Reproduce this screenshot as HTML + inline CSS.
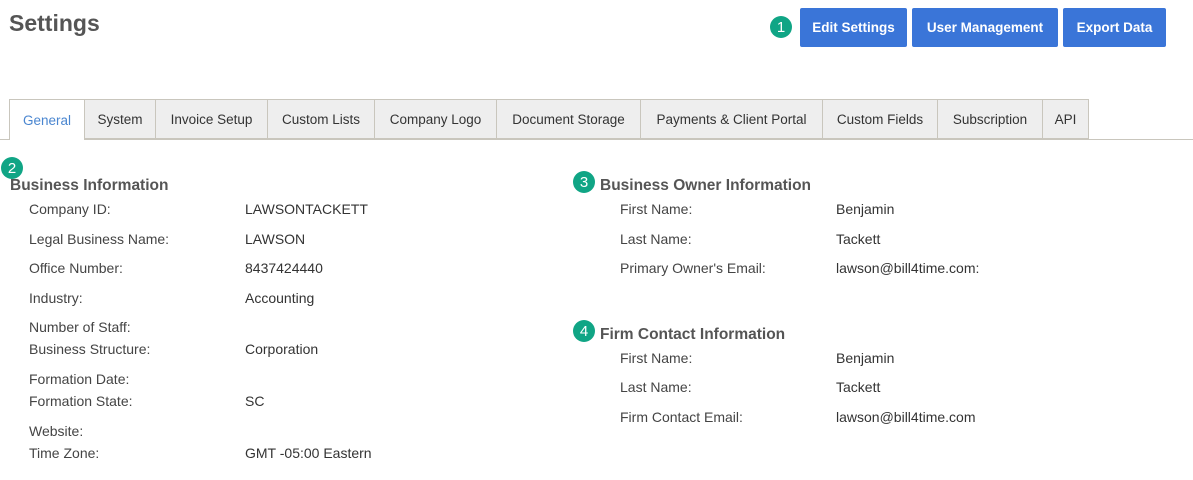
<!DOCTYPE html>
<html><head><style>
body{margin:0;width:1193px;height:480px;background:#fff;font-family:"Liberation Sans",sans-serif;position:relative;overflow:hidden;color:#444}
.a{position:absolute;white-space:nowrap}
.btn{position:absolute;top:8px;height:39px;background:#3a75d8;color:#fff;font-size:13.5px;font-weight:bold;border-radius:2px;display:flex;align-items:center;justify-content:center}
.badge{position:absolute;width:22px;height:22px;border-radius:50%;background:#10a585;color:#fff;font-size:15px;display:flex;align-items:center;justify-content:center}
.tab{position:absolute;top:99px;height:40px;background:#eeeeee;border:1px solid #c9c6bd;border-left:none;box-sizing:border-box;font-size:13.5px;color:#333;display:flex;align-items:center;justify-content:center;white-space:nowrap}
.h{position:absolute;font-size:15.5px;font-weight:bold;color:#555;white-space:nowrap}
.l,.v{position:absolute;font-size:14px;color:#444;white-space:nowrap}
.v{color:#333}
</style></head><body>
<div class="a" style="left:9px;top:10px;font-size:23px;font-weight:bold;color:#555">Settings</div>
<div class="badge" style="left:770px;top:16px">1</div>
<div class="btn" style="left:800px;width:107px">Edit Settings</div>
<div class="btn" style="left:912px;width:146px">User Management</div>
<div class="btn" style="left:1063px;width:103px">Export Data</div>
<div class="a" style="left:0;top:139px;width:1193px;height:1px;background:#c9c6bd"></div>
<div class="tab" style="left:9px;width:76px;background:#fff;border-left:1px solid #c9c6bd;border-bottom:none;color:#4a86d0;height:41px">General</div>
<div class="tab" style="left:85px;width:71px">System</div>
<div class="tab" style="left:156px;width:112px">Invoice Setup</div>
<div class="tab" style="left:268px;width:107px">Custom Lists</div>
<div class="tab" style="left:375px;width:122px">Company Logo</div>
<div class="tab" style="left:497px;width:144px">Document Storage</div>
<div class="tab" style="left:641px;width:182px">Payments &amp; Client Portal</div>
<div class="tab" style="left:823px;width:115px">Custom Fields</div>
<div class="tab" style="left:938px;width:105px">Subscription</div>
<div class="tab" style="left:1043px;width:46px">API</div>
<div class="badge" style="left:1px;top:157px">2</div>
<div class="h" style="left:10px;top:177px">Business Information</div>
<div class="l" style="left:29px;top:201px">Company ID:</div><div class="v" style="left:245px;top:201px">LAWSONTACKETT</div>
<div class="l" style="left:29px;top:231px">Legal Business Name:</div><div class="v" style="left:245px;top:231px">LAWSON</div>
<div class="l" style="left:29px;top:260px">Office Number:</div><div class="v" style="left:245px;top:260px">8437424440</div>
<div class="l" style="left:29px;top:290px">Industry:</div><div class="v" style="left:245px;top:290px">Accounting</div>
<div class="l" style="left:29px;top:319px">Number of Staff:</div>
<div class="l" style="left:29px;top:341px">Business Structure:</div><div class="v" style="left:245px;top:341px">Corporation</div>
<div class="l" style="left:29px;top:371px">Formation Date:</div>
<div class="l" style="left:29px;top:393px">Formation State:</div><div class="v" style="left:245px;top:393px">SC</div>
<div class="l" style="left:29px;top:423px">Website:</div>
<div class="l" style="left:29px;top:445px">Time Zone:</div><div class="v" style="left:245px;top:445px">GMT -05:00 Eastern</div>
<div class="badge" style="left:573px;top:171px">3</div>
<div class="h" style="left:600px;top:177px">Business Owner Information</div>
<div class="l" style="left:620px;top:201px">First Name:</div><div class="v" style="left:836px;top:201px">Benjamin</div>
<div class="l" style="left:620px;top:231px">Last Name:</div><div class="v" style="left:836px;top:231px">Tackett</div>
<div class="l" style="left:620px;top:260px">Primary Owner's Email:</div><div class="v" style="left:836px;top:260px">lawson@bill4time.com:</div>
<div class="badge" style="left:573px;top:320px">4</div>
<div class="h" style="left:600px;top:326px">Firm Contact Information</div>
<div class="l" style="left:620px;top:350px">First Name:</div><div class="v" style="left:836px;top:350px">Benjamin</div>
<div class="l" style="left:620px;top:379px">Last Name:</div><div class="v" style="left:836px;top:379px">Tackett</div>
<div class="l" style="left:620px;top:409px">Firm Contact Email:</div><div class="v" style="left:836px;top:409px">lawson@bill4time.com</div>
</body></html>
